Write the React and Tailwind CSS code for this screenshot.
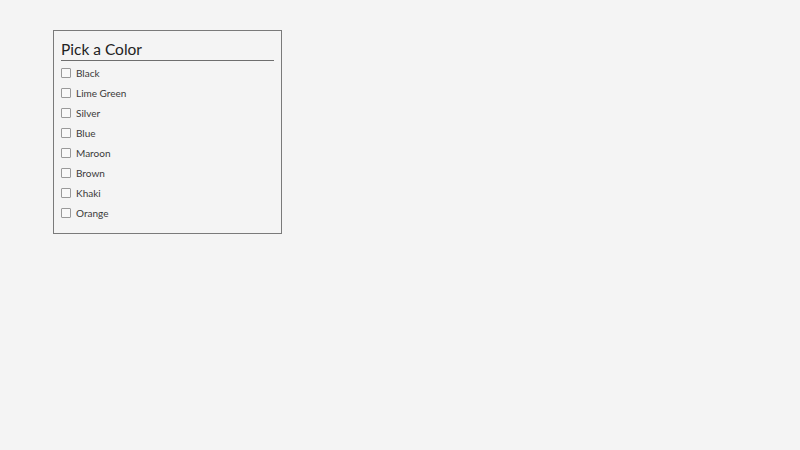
export default function App() {
  const colors = ["Black", "Lime Green", "Silver", "Blue", "Maroon", "Brown", "Khaki", "Orange"];
  return (
    <div className="w-[800px] h-[450px] bg-[#f4f4f4] pt-[30px] pl-[53px]" style={{ fontFamily: 'Lato, "Open Sans", sans-serif' }}>
      <div className="w-[229px] border border-[#7a7a7a] px-[7px] pb-[10px]">
        <div className="h-[30px] border-b border-[#6e6e6e] flex items-end pb-[1px]">
          <span className="text-[15.5px] leading-[20px] text-[#222]">Pick a Color</span>
        </div>
        <div className="flex flex-col mt-[2px]">
          {colors.map((c) => (
            <label key={c} className="h-[20px] flex items-center">
              <span className="w-[10px] h-[10px] border border-[#999] rounded-[1px] bg-[#f8f8f8]" />
              <span className="ml-[5px] text-[10px] leading-[12px] text-[#3a3a3a]">{c}</span>
            </label>
          ))}
        </div>
      </div>
    </div>
  );
}
